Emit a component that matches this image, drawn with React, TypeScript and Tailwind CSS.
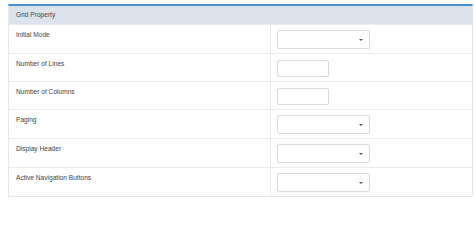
const rows: { label: string; kind: "select" | "input" }[] = [
  { label: "Initial Mode", kind: "select" },
  { label: "Number of Lines", kind: "input" },
  { label: "Number of Columns", kind: "input" },
  { label: "Paging", kind: "select" },
  { label: "Display Header", kind: "select" },
  { label: "Active Navigation Buttons", kind: "select" },
]

function Field({ kind }: { kind: "select" | "input" }) {
  if (kind === "input") {
    return <div className="mt-[6px] h-[17px] w-[52px] rounded-[2px] border border-[#dadada] bg-white" />
  }
  return (
    <div className="mt-[5px] flex h-[19px] w-[93px] items-center justify-end rounded-[2px] border border-[#dadada] bg-white pr-[6px]">
      <span className="h-0 w-0 border-x-[2px] border-t-[2px] border-x-transparent border-t-[#555]" />
    </div>
  )
}

export default function App() {
  return (
    <div className="h-[204px] w-[474px] bg-white pl-[8px] pt-[4px] font-['Liberation_Sans',Arial,sans-serif] text-[6.6px] text-[#444]">
      <div className="w-[465px] border-t-2 border-[#4a8fd0] border-x border-x-[#e8e8e8] border-b border-b-[#e8e8e8]">
        <div className="flex h-[18px] items-center bg-[#dde3ec] pl-[7px]">Grid Property</div>
        {rows.map((row) => (
          <div key={row.label} className={`flex border-t border-[#ececec] ${row.kind === "select" ? "h-[29px]" : "h-[28px]"}`}>
            <div className="w-[262px] border-r border-[#ececec] pl-[7px] pt-[5px]">{row.label}</div>
            <div className="flex-1 pl-[6px]">
              <Field kind={row.kind} />
            </div>
          </div>
        ))}
      </div>
    </div>
  )
}
